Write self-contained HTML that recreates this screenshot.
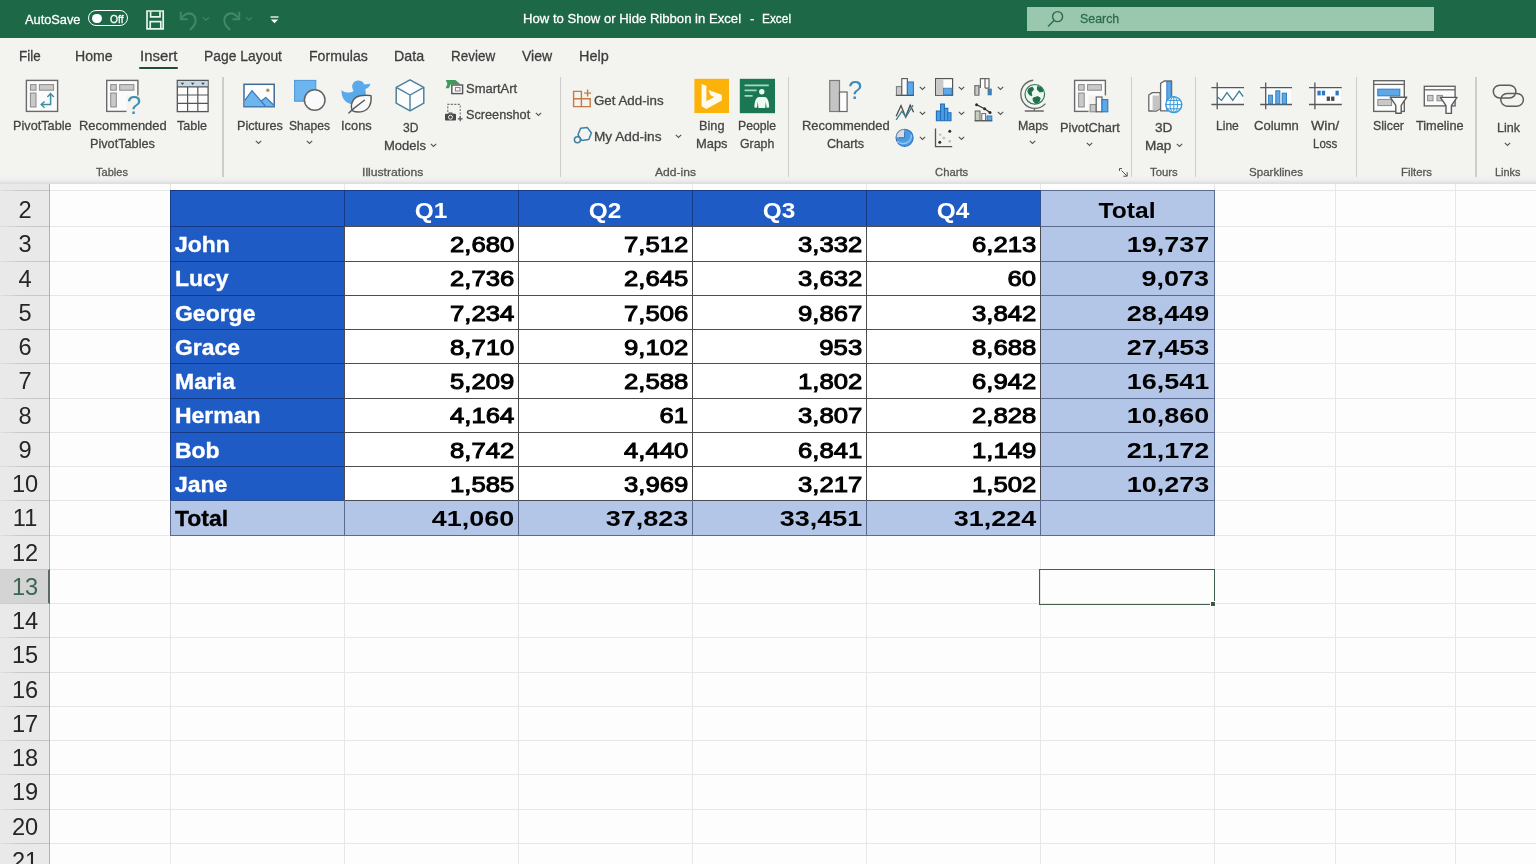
<!DOCTYPE html>
<html><head><meta charset="utf-8"><title>How to Show or Hide Ribbon in Excel - Excel</title>
<style>
html,body{margin:0;padding:0;}
body{width:1536px;height:864px;overflow:hidden;position:relative;background:#fdfdfd;font-family:"Liberation Sans",sans-serif;}
.t{position:absolute;white-space:nowrap;transform-origin:left center;display:block;-webkit-text-stroke:0.28px currentColor;}
.a{position:absolute;}
svg{position:absolute;overflow:visible;}
#titlebar{left:0;top:0;width:1536px;height:38px;background:#1d6847;}
#ribbon{left:0;top:38px;width:1536px;height:139px;background:#f3f3f0;}
#ribshadow{left:0;top:177px;width:1536px;height:7px;background:linear-gradient(#f1f1f1 0%,#eeeeee 45%,#dcdcdc 100%);}
.sep{position:absolute;top:77px;width:1.4px;height:100px;background:#cdcdcb;}
.cell{position:absolute;box-sizing:border-box;}
.num{position:absolute;white-space:nowrap;display:block;font-size:21.2px;line-height:24px;transform-origin:right center;color:#000;}
.nm{position:absolute;white-space:nowrap;display:block;font-size:22.3px;line-height:24px;transform-origin:left center;font-weight:bold;}
.rh{position:absolute;left:0.6px;width:49px;text-align:center;font-size:23.6px;line-height:28px;color:#262626;}
#w{position:absolute;left:0;top:0;width:1536px;height:864px;will-change:transform;}
</style></head><body><div id="w">
<div class="a" id="titlebar"></div>
<span class="t " style="left:25.0px;top:13.9px;font-size:12.9px;line-height:12.9px;color:#fff;transform:scaleX(0.992);">AutoSave</span>
<div class="a" style="left:87.8px;top:9.7px;width:38.4px;height:14.2px;border:1.6px solid #fff;border-radius:10px;"></div>
<div class="a" style="left:92.3px;top:13.7px;width:9.4px;height:9.4px;border-radius:5px;background:#fff;"></div>
<span class="t " style="left:109.5px;top:13.7px;font-size:10.8px;line-height:10.8px;color:#fff;transform:scaleX(0.950);">Off</span>
<svg style="left:146px;top:10.1px" width="19" height="20" viewBox="0 0 19 20" fill="none" stroke="#e6f5ed" stroke-width="1.7">
<path d="M1 1h16.200v17.800H1z"/><path d="M4.600 1.200v5.600h9.400V1.200"/><path d="M4.200 18.600v-7h10.600v7"/></svg>
<svg style="left:177.500px;top:8.600px" width="22" height="22" viewBox="0 0 20 18" preserveAspectRatio="none" fill="none" stroke="#438765" stroke-width="1.8">
<path d="M2.5 2.2v6.2h6.2"/><path d="M2.8 8.2c2-3.6 6-5.6 9.6-4.2 4 1.6 5 6.6 1.6 10.2l-3.2 3"/></svg>
<svg style="left:201.500px;top:15.800px" width="8" height="6" viewBox="0 0 8 6" fill="none" stroke="#438765" stroke-width="1.2"><path d="M1 1.2l3 3 3-3"/></svg>
<svg style="left:220px;top:8.600px" width="22" height="22" viewBox="0 0 20 18" preserveAspectRatio="none" fill="none" stroke="#438765" stroke-width="1.8">
<path d="M17.5 2.2v6.2h-6.2"/><path d="M17.2 8.2c-2-3.6-6-5.6-9.6-4.2-4 1.6-5 6.6-1.6 10.2l3.2 3"/></svg>
<svg style="left:245px;top:15.800px" width="8" height="6" viewBox="0 0 8 6" fill="none" stroke="#438765" stroke-width="1.2"><path d="M1 1.2l3 3 3-3"/></svg>
<svg style="left:270px;top:15.8px" width="9" height="8" viewBox="0 0 9 8"><path d="M0.500 1h8" stroke="#fff" stroke-width="1.300"/><path d="M0.800 3.600h7.400l-3.700 3.600z" fill="#fff"/></svg>
<span class="t " style="left:522.5px;top:11.8px;font-size:13.1px;line-height:13.1px;color:#fff;transform:scaleX(1.002);">How to Show or Hide Ribbon in Excel</span>
<span class="t " style="left:750.3px;top:11.8px;font-size:13.1px;line-height:13.1px;color:#fff;transform:scaleX(0.986);">-</span>
<span class="t " style="left:761.5px;top:11.8px;font-size:13.1px;line-height:13.1px;color:#fff;transform:scaleX(0.908);">Excel</span>
<div class="a" style="left:1027px;top:7px;width:406.5px;height:24.3px;background:#9ac8af;"></div>
<svg style="left:1047px;top:10px" width="18" height="18" viewBox="0 0 18 18" fill="none" stroke="#2c6a4b" stroke-width="1.4"><circle cx="10.6" cy="6.6" r="5"/><path d="M7 10.4L1 16.6"/></svg>
<span class="t " style="left:1080.0px;top:13.2px;font-size:12.8px;line-height:12.8px;color:#2c6a4b;transform:scaleX(0.967);">Search</span>
<div class="a" id="ribbon"></div>
<div class="a" id="ribshadow"></div>
<span class="t " style="left:19.4px;top:49.0px;font-size:14.1px;line-height:14.1px;color:#3d3d3d;transform:scaleX(0.951);">File</span>
<span class="t " style="left:75.0px;top:49.0px;font-size:14.1px;line-height:14.1px;color:#3d3d3d;transform:scaleX(1.000);">Home</span>
<span class="t " style="left:139.6px;top:49.0px;font-size:14.1px;line-height:14.1px;color:#3d3d3d;transform:scaleX(1.061);">Insert</span>
<span class="t " style="left:203.7px;top:49.0px;font-size:14.1px;line-height:14.1px;color:#3d3d3d;transform:scaleX(0.985);">Page Layout</span>
<span class="t " style="left:308.5px;top:49.0px;font-size:14.1px;line-height:14.1px;color:#3d3d3d;transform:scaleX(1.001);">Formulas</span>
<span class="t " style="left:394.3px;top:49.0px;font-size:14.1px;line-height:14.1px;color:#3d3d3d;transform:scaleX(1.011);">Data</span>
<span class="t " style="left:451.2px;top:49.0px;font-size:14.1px;line-height:14.1px;color:#3d3d3d;transform:scaleX(0.954);">Review</span>
<span class="t " style="left:522.0px;top:49.0px;font-size:14.1px;line-height:14.1px;color:#3d3d3d;transform:scaleX(0.996);">View</span>
<span class="t " style="left:579.3px;top:49.0px;font-size:14.1px;line-height:14.1px;color:#3d3d3d;transform:scaleX(1.024);">Help</span>
<div class="a" style="left:139.3px;top:66.8px;width:38.6px;height:2.6px;background:#1f4e38;border-radius:1.3px;"></div>
<div class="sep" style="left:222.4px"></div>
<div class="sep" style="left:559.8px"></div>
<div class="sep" style="left:787.9px"></div>
<div class="sep" style="left:1130.9px"></div>
<div class="sep" style="left:1194.8px"></div>
<div class="sep" style="left:1355.6px"></div>
<div class="sep" style="left:1475.4px"></div>
<span class="t " style="left:12.7px;top:119.5px;font-size:12.9px;line-height:12.9px;color:#444;transform:scaleX(0.985);">PivotTable</span>
<span class="t " style="left:78.7px;top:119.5px;font-size:12.9px;line-height:12.9px;color:#444;transform:scaleX(1.003);">Recommended</span>
<span class="t " style="left:89.8px;top:138.2px;font-size:12.9px;line-height:12.9px;color:#444;transform:scaleX(0.984);">PivotTables</span>
<span class="t " style="left:177.3px;top:119.5px;font-size:12.9px;line-height:12.9px;color:#444;transform:scaleX(0.976);">Table</span>
<span class="t " style="left:96.0px;top:166.9px;font-size:11.2px;line-height:11.2px;color:#555;transform:scaleX(0.988);">Tables</span>
<span class="t " style="left:236.6px;top:119.5px;font-size:12.9px;line-height:12.9px;color:#444;transform:scaleX(0.983);">Pictures</span>
<svg style="left:255.3px;top:140.0px" width="7" height="5" viewBox="0 0 7 5" fill="none" stroke="#555" stroke-width="1.1"><path d="M0.8 0.8l2.7 2.7 2.7-2.7"/></svg>
<span class="t " style="left:289.0px;top:119.5px;font-size:12.9px;line-height:12.9px;color:#444;transform:scaleX(0.937);">Shapes</span>
<svg style="left:305.5px;top:140.0px" width="7" height="5" viewBox="0 0 7 5" fill="none" stroke="#555" stroke-width="1.1"><path d="M0.8 0.8l2.7 2.7 2.7-2.7"/></svg>
<span class="t " style="left:341.3px;top:119.5px;font-size:12.9px;line-height:12.9px;color:#444;transform:scaleX(0.996);">Icons</span>
<span class="t " style="left:402.6px;top:121.9px;font-size:12.9px;line-height:12.9px;color:#444;transform:scaleX(0.940);">3D</span>
<span class="t " style="left:383.8px;top:139.6px;font-size:12.9px;line-height:12.9px;color:#444;transform:scaleX(1.010);">Models</span>
<svg style="left:430.1px;top:143.4px" width="7" height="5" viewBox="0 0 7 5" fill="none" stroke="#555" stroke-width="1.1"><path d="M0.8 0.8l2.7 2.7 2.7-2.7"/></svg>
<span class="t " style="left:466.1px;top:83.0px;font-size:12.9px;line-height:12.9px;color:#444;transform:scaleX(1.006);">SmartArt</span>
<span class="t " style="left:466.1px;top:108.5px;font-size:12.9px;line-height:12.9px;color:#444;transform:scaleX(0.984);">Screenshot</span>
<svg style="left:534.8px;top:111.8px" width="7" height="5" viewBox="0 0 7 5" fill="none" stroke="#555" stroke-width="1.1"><path d="M0.8 0.8l2.7 2.7 2.7-2.7"/></svg>
<span class="t " style="left:361.7px;top:166.9px;font-size:11.2px;line-height:11.2px;color:#555;transform:scaleX(1.086);">Illustrations</span>
<span class="t " style="left:594.3px;top:94.8px;font-size:12.9px;line-height:12.9px;color:#444;transform:scaleX(1.034);">Get Add-ins</span>
<span class="t " style="left:594.3px;top:131.2px;font-size:12.9px;line-height:12.9px;color:#444;transform:scaleX(1.058);">My Add-ins</span>
<svg style="left:674.9px;top:133.8px" width="7" height="5" viewBox="0 0 7 5" fill="none" stroke="#555" stroke-width="1.1"><path d="M0.8 0.8l2.7 2.7 2.7-2.7"/></svg>
<span class="t " style="left:698.7px;top:120.0px;font-size:12.9px;line-height:12.9px;color:#444;transform:scaleX(0.988);">Bing</span>
<span class="t " style="left:696.0px;top:138.4px;font-size:12.9px;line-height:12.9px;color:#444;transform:scaleX(0.999);">Maps</span>
<span class="t " style="left:738.1px;top:120.0px;font-size:12.9px;line-height:12.9px;color:#444;transform:scaleX(0.949);">People</span>
<span class="t " style="left:740.3px;top:138.4px;font-size:12.9px;line-height:12.9px;color:#444;transform:scaleX(0.959);">Graph</span>
<span class="t " style="left:654.5px;top:166.9px;font-size:11.2px;line-height:11.2px;color:#555;transform:scaleX(1.082);">Add-ins</span>
<span class="t " style="left:801.9px;top:119.5px;font-size:12.9px;line-height:12.9px;color:#444;transform:scaleX(1.003);">Recommended</span>
<span class="t " style="left:826.7px;top:138.3px;font-size:12.9px;line-height:12.9px;color:#444;transform:scaleX(0.979);">Charts</span>
<svg style="left:918.5px;top:85.8px" width="7" height="5" viewBox="0 0 7 5" fill="none" stroke="#555" stroke-width="1.1"><path d="M0.8 0.8l2.7 2.7 2.7-2.7"/></svg>
<svg style="left:918.5px;top:111.0px" width="7" height="5" viewBox="0 0 7 5" fill="none" stroke="#555" stroke-width="1.1"><path d="M0.8 0.8l2.7 2.7 2.7-2.7"/></svg>
<svg style="left:957.7px;top:85.8px" width="7" height="5" viewBox="0 0 7 5" fill="none" stroke="#555" stroke-width="1.1"><path d="M0.8 0.8l2.7 2.7 2.7-2.7"/></svg>
<svg style="left:957.7px;top:111.0px" width="7" height="5" viewBox="0 0 7 5" fill="none" stroke="#555" stroke-width="1.1"><path d="M0.8 0.8l2.7 2.7 2.7-2.7"/></svg>
<svg style="left:997.1px;top:85.8px" width="7" height="5" viewBox="0 0 7 5" fill="none" stroke="#555" stroke-width="1.1"><path d="M0.8 0.8l2.7 2.7 2.7-2.7"/></svg>
<svg style="left:997.1px;top:111.0px" width="7" height="5" viewBox="0 0 7 5" fill="none" stroke="#555" stroke-width="1.1"><path d="M0.8 0.8l2.7 2.7 2.7-2.7"/></svg>
<svg style="left:918.5px;top:136.4px" width="7" height="5" viewBox="0 0 7 5" fill="none" stroke="#555" stroke-width="1.1"><path d="M0.8 0.8l2.7 2.7 2.7-2.7"/></svg>
<svg style="left:957.7px;top:136.4px" width="7" height="5" viewBox="0 0 7 5" fill="none" stroke="#555" stroke-width="1.1"><path d="M0.8 0.8l2.7 2.7 2.7-2.7"/></svg>
<span class="t " style="left:1017.9px;top:120.0px;font-size:12.9px;line-height:12.9px;color:#444;transform:scaleX(0.961);">Maps</span>
<svg style="left:1029.2px;top:140.0px" width="7" height="5" viewBox="0 0 7 5" fill="none" stroke="#555" stroke-width="1.1"><path d="M0.8 0.8l2.7 2.7 2.7-2.7"/></svg>
<span class="t " style="left:1060.3px;top:121.9px;font-size:12.9px;line-height:12.9px;color:#444;transform:scaleX(0.993);">PivotChart</span>
<svg style="left:1085.6px;top:142.2px" width="7" height="5" viewBox="0 0 7 5" fill="none" stroke="#555" stroke-width="1.1"><path d="M0.8 0.8l2.7 2.7 2.7-2.7"/></svg>
<span class="t " style="left:934.6px;top:166.9px;font-size:11.2px;line-height:11.2px;color:#555;transform:scaleX(1.006);">Charts</span>
<svg style="left:1118.8px;top:168.3px" width="9" height="9" viewBox="0 0 9 9" fill="none" stroke="#555" stroke-width="1"><path d="M0.5 3V0.5H3"/><path d="M2.5 2.5L8 8"/><path d="M8.2 4.2V8.2H4.2"/></svg>
<span class="t " style="left:1154.8px;top:121.9px;font-size:12.9px;line-height:12.9px;color:#444;transform:scaleX(1.061);">3D</span>
<span class="t " style="left:1144.6px;top:139.6px;font-size:12.9px;line-height:12.9px;color:#444;transform:scaleX(1.052);">Map</span>
<svg style="left:1175.9px;top:143.4px" width="7" height="5" viewBox="0 0 7 5" fill="none" stroke="#555" stroke-width="1.1"><path d="M0.8 0.8l2.7 2.7 2.7-2.7"/></svg>
<span class="t " style="left:1150.0px;top:166.9px;font-size:11.2px;line-height:11.2px;color:#555;transform:scaleX(1.011);">Tours</span>
<span class="t " style="left:1216.4px;top:120.0px;font-size:12.9px;line-height:12.9px;color:#444;transform:scaleX(0.935);">Line</span>
<span class="t " style="left:1254.0px;top:120.0px;font-size:12.9px;line-height:12.9px;color:#444;transform:scaleX(1.010);">Column</span>
<span class="t " style="left:1311.1px;top:120.0px;font-size:12.9px;line-height:12.9px;color:#444;transform:scaleX(1.097);">Win/</span>
<span class="t " style="left:1313.3px;top:138.4px;font-size:12.9px;line-height:12.9px;color:#444;transform:scaleX(0.895);">Loss</span>
<span class="t " style="left:1248.7px;top:166.9px;font-size:11.2px;line-height:11.2px;color:#555;transform:scaleX(1.033);">Sparklines</span>
<span class="t " style="left:1373.0px;top:120.0px;font-size:12.9px;line-height:12.9px;color:#444;transform:scaleX(0.961);">Slicer</span>
<span class="t " style="left:1416.2px;top:120.0px;font-size:12.9px;line-height:12.9px;color:#444;transform:scaleX(0.986);">Timeline</span>
<span class="t " style="left:1400.7px;top:166.9px;font-size:11.2px;line-height:11.2px;color:#555;transform:scaleX(1.017);">Filters</span>
<span class="t " style="left:1496.6px;top:121.9px;font-size:12.9px;line-height:12.9px;color:#444;transform:scaleX(0.972);">Link</span>
<svg style="left:1504.1px;top:142.2px" width="7" height="5" viewBox="0 0 7 5" fill="none" stroke="#555" stroke-width="1.1"><path d="M0.8 0.8l2.7 2.7 2.7-2.7"/></svg>
<span class="t " style="left:1494.8px;top:166.9px;font-size:11.2px;line-height:11.2px;color:#555;transform:scaleX(0.975);">Links</span>
<svg style="left:0;top:0" width="1536" height="190" viewBox="0 0 1536 190"><rect x="26.4" y="80.4" width="31.2" height="31.0" fill="#fbfbfb" stroke="#6a6a6a" stroke-width="1.4"/>
<rect x="30.4" y="84.60000000000001" width="5.6" height="5.6" fill="#c9c9c9" stroke="#8a8a8a" stroke-width="1"/>
<rect x="39.4" y="84.60000000000001" width="14.2" height="5.6" fill="#c9c9c9" stroke="#8a8a8a" stroke-width="1"/>
<rect x="30.4" y="93.0" width="5.6" height="14.0" fill="#c9c9c9" stroke="#8a8a8a" stroke-width="1"/>
<path d="M41.4 104.6H50.6V94" fill="none" stroke="#3c8c9a" stroke-width="1.5"/>
<path d="M44.6 101.4l-3.4 3.2 3.4 3.2M47.4 97l3.2-3.4 3.2 3.4" fill="none" stroke="#3c8c9a" stroke-width="1.4"/>
<rect x="106.7" y="80.4" width="31.2" height="31.0" fill="#fbfbfb" stroke="#6a6a6a" stroke-width="1.4"/>
<rect x="110.7" y="84.60000000000001" width="5.6" height="5.6" fill="#c9c9c9" stroke="#8a8a8a" stroke-width="1"/>
<rect x="119.7" y="84.60000000000001" width="14.2" height="5.6" fill="#c9c9c9" stroke="#8a8a8a" stroke-width="1"/>
<rect x="110.7" y="93.0" width="5.6" height="14.0" fill="#c9c9c9" stroke="#8a8a8a" stroke-width="1"/>
<rect x="126.5" y="95.5" width="15" height="19" fill="#f3f3f0"/>
<text x="126.8" y="113.8" font-family="Liberation Sans, sans-serif" font-size="26" fill="#3e92b0">?</text>
<rect x="177.3" y="80.4" width="30.8" height="31.2" fill="#fcfcfc" stroke="#555" stroke-width="1.3"/>
<rect x="177.9" y="81" width="29.6" height="5.6" fill="#c5d9e8"/>
<path d="M177.3 86.8h30.8M177.3 95h30.8M177.3 103.3h30.8M187.6 86.8v24.8M197.8 86.8v24.8" stroke="#555" stroke-width="1.2" fill="none"/>
<path d="M180.6 82.8h3.6l-1.8 2.2z" fill="#3a4a58"/>
<path d="M190.89999999999998 82.8h3.6l-1.8 2.2z" fill="#3a4a58"/>
<path d="M201.2 82.8h3.6l-1.8 2.2z" fill="#3a4a58"/>
<rect x="244" y="84.3" width="30.2" height="22.4" fill="#fdfdfd" stroke="#3d6c98" stroke-width="1.5"/>
<path d="M244.8 100.4l7.2-9.8 9 10.6 4.800-3.800 7.800 7.600v1.200h-28.800z" fill="#6db5ee"/>
<path d="M244.800 100.400l7.200-9.800 13.400 15.600M261 101.200l4.800-3.800 7.800 7.600" fill="none" stroke="#3577bd" stroke-width="1.200" stroke-linejoin="round"/>
<circle cx="267.8" cy="90.3" r="1.7" fill="#c8853f"/>
<rect x="294.6" y="80.4" width="21.2" height="20.8" fill="#6db5ee" stroke="#4f94d6" stroke-width="1"/>
<circle cx="314.7" cy="100" r="10.3" fill="#fafafa" stroke="#636363" stroke-width="1.5"/>
<path d="M341.6 89.8c1.2 1.8 3.2 2.8 6 2.8 3.6 0 5.4-.8 6-2.2-1-1.2-1.6-2.8-1.4-4.6.4-3.4 3.2-5.6 6.6-5.4 3 .2 5 2 5.6 4.200l6-.800c-.6 2.800-2.600 4.600-5.200 5.400.6 1.600.8 3.400.4 5.200-1 5.400-5.800 9.800-12.200 9.800-7.800 0-12.400-6-11.800-14.400z" fill="#5aa9ea"/>
<path d="M352.200 110.6c-2.400-6.400.8-13.200 8-14.800 3.800-.8 7.600-.6 10.800-.2 1 7.600-1.800 14.200-8.800 16-3.400.8-7 .4-10-1z" fill="#fafafa" stroke="#5a5a5a" stroke-width="1.4" stroke-linejoin="round"/>
<path d="M348.800 113l5-4.600 10.600-8.200" fill="none" stroke="#5a5a5a" stroke-width="1.400" stroke-linecap="round"/>
<path d="M410 79.800l13.800 7.600v15.800l-13.800 7.600-13.800-7.600v-15.800z" fill="#fafcfd" stroke="#4d8199" stroke-width="1.500" stroke-linejoin="round"/>
<path d="M396.200 87.400l13.800 7.600 13.800-7.600M410 95v15.800M399.800 89.400l5.200 2.800" fill="none" stroke="#4d8199" stroke-width="1.400"/>
<path d="M445.800 80h9.600l5 4.200h-9.800l-1.600 4h-3.400l1.800-4.200z" fill="#3f9b57"/>
<rect x="451.800" y="85" width="10.800" height="8.600" fill="#fafafa" stroke="#555" stroke-width="1.400"/>
<rect x="455.400" y="87.600" width="4.600" height="3.400" fill="none" stroke="#777" stroke-width="0.900"/>
<path d="M447.800 112v-7.600h12.400v14" fill="none" stroke="#777" stroke-width="1.100" stroke-dasharray="2.200 1.300"/>
<rect x="445" y="113.800" width="11" height="6.800" rx="0.800" fill="#4a4a4a"/>
<path d="M448 113.800l.8-1.400h3.400l.8 1.400z" fill="#4a4a4a"/>
<circle cx="450.500" cy="117.200" r="2" fill="none" stroke="#f3f3f0" stroke-width="1"/>
<path d="M460.200 116.400v4.800M457.800 118.800h4.800" stroke="#555" stroke-width="1.200"/>
<path d="M573.600 91.400h7.800v15.200h-7.800zM581.400 98.800h8.800v7.800h-8.800M573.600 98.800h7.800" fill="none" stroke="#c67a45" stroke-width="1.400"/>
<path d="M587.600 89.600v7M584.100 93.100h7" stroke="#c67a45" stroke-width="1.400"/>
<path d="M580.600 128.200l6.800-.6 4 5.400-2.600 6.600-7 .8-3.800-5.600z" fill="none" stroke="#3d81a8" stroke-width="1.500" stroke-linejoin="round"/>
<circle cx="577.400" cy="139.800" r="3" fill="#f6f6f4" stroke="#3d81a8" stroke-width="1.500"/>
<rect x="694.400" y="78.800" width="34.600" height="34.200" fill="#fbb30a"/>
<path d="M701.600 84l4.800 1.800v15.400l7.800-4.200-3.600-1.800-2.200-5.200 13.400 4.800v5.600l-15.400 8.600-4.800-2.800z" fill="#fffaf0"/>
<rect x="739.800" y="78.800" width="35.200" height="34.400" fill="#1b7753"/>
<path d="M744.600 85.400h24.200M744.600 90.400h12M744.600 95.800h8" stroke="#a5d9c2" stroke-width="1.700"/>
<circle cx="761.800" cy="91.700" r="2.700" fill="#eefaf4"/>
<path d="M754.400 107.400c.2-5.600 1.200-9.600 4.200-10.400h6.400c3 .8 4 4.800 4.200 10.400l-2.600.4-.8-6.400-.6 6.600h-6.800l-.6-6.600-.8 6.400z" fill="#eefaf4"/>
<rect x="829.700" y="80.500" width="9.800" height="31" fill="#c4c4c4" stroke="#7c7c7c" stroke-width="1.200"/>
<rect x="839.500" y="92" width="7.600" height="19.500" fill="#fdfdfd" stroke="#666" stroke-width="1.200"/>
<text x="847.900" y="99.300" font-family="Liberation Sans, sans-serif" font-size="25.5" fill="#3d8abb">?</text>
<rect x="896.400" y="86.600" width="5.400" height="8.700" fill="#c9c9c9" stroke="#777" stroke-width="1"/>
<rect x="901.800" y="78.600" width="5.600" height="16.700" fill="#fdfdfd" stroke="#555" stroke-width="1.100"/>
<rect x="907.400" y="82" width="6" height="13.300" fill="#5fa8e6" stroke="#2f78c4" stroke-width="1.100"/>
<path d="M895.800 95.400h18.200" stroke="#555" stroke-width="1.100"/>
<rect x="935.600" y="78.600" width="17" height="16.700" fill="#fdfdfd" stroke="#555" stroke-width="1.200"/>
<rect x="936.200" y="79.200" width="7.200" height="15.500" fill="#c9c9c9"/>
<rect x="943.400" y="88.200" width="8.600" height="6.500" fill="#5fa8e6" stroke="#2f78c4" stroke-width="0.800"/>
<path d="M975 95.300v-9.600h3.800v9.600M980.400 88v-9.400h4.600v9.400M985 78.600h4v9.600h-4" fill="#fdfdfd" stroke="#666" stroke-width="1.200"/>
<rect x="975" y="85.700" width="3.800" height="9.600" fill="#c9c9c9" stroke="#777" stroke-width="1"/>
<rect x="987.600" y="88.600" width="4.200" height="6.700" fill="#3f7fb8"/>
<path d="M896.200 116.200l4.800-10.600 4.600 11.400 4.600-11.800 3.400 7" fill="none" stroke="#4a4a4a" stroke-width="1.300"/>
<path d="M896.200 119.800l5.600-8.400 4.200 5.400 7-11.600" fill="none" stroke="#3d7f96" stroke-width="1.300"/>
<path d="M936.400 120.800v-9.800h4.200v-7h3.800v4.400h3.400v4.400h3.200v8z" fill="#4b9ce2" stroke="#1f6db8" stroke-width="1.100"/>
<path d="M940.600 111v9.800M944.400 108.400v12.400M947.800 112.800v8" stroke="#1f6db8" stroke-width="1"/>
<rect x="975.200" y="111" width="4.800" height="9.600" fill="#c8cdbd" stroke="#666" stroke-width="1"/>
<rect x="981.800" y="113.600" width="3.800" height="7" fill="#fdfdfd" stroke="#666" stroke-width="1"/>
<rect x="987" y="116" width="4.800" height="4.600" fill="#5fa8e6" stroke="#2f78c4" stroke-width="1"/>
<path d="M974.600 120.800h17.600" stroke="#555" stroke-width="1.200"/>
<path d="M976.600 104.800l8 4 5.400 3.600" fill="none" stroke="#2e2e2e" stroke-width="1.200"/>
<circle cx="976.6" cy="104.8" r="1.500" fill="#2e2e2e"/>
<circle cx="984.6" cy="108.8" r="1.500" fill="#2e2e2e"/>
<circle cx="990" cy="112.4" r="1.500" fill="#2e2e2e"/>
<circle cx="904.600" cy="137.800" r="8.500" fill="#4b9ce2" stroke="#2f78c4" stroke-width="1.200"/>
<path d="M904.600 137.800v-8.500a8.500 8.500 0 0 0-8.500 8.500z" fill="#d4dde6" stroke="#7a8a9a" stroke-width="0.900"/>
<path d="M904.600 132.200v5.600h-5.600" fill="none" stroke="#2f78c4" stroke-width="0.900"/>
<path d="M897 141.200c2.600 2.400 7 3.200 10.400 1.200 3-1.800 4.200-4.800 3.800-7.800" fill="none" stroke="#9ccaf2" stroke-width="1.300"/>
<path d="M935.500 128.400v18.200h16.700" fill="none" stroke="#555" stroke-width="1.300"/>
<circle cx="949.800" cy="131.300" r="1.500" fill="#333"/><circle cx="939.800" cy="142.200" r="1.500" fill="#333"/>
<circle cx="940.200" cy="134.600" r="1.200" fill="#b8b8b8"/><circle cx="943.800" cy="138" r="1.600" fill="#c8c8c8"/><circle cx="949.800" cy="141.200" r="1.200" fill="#b8b8b8"/>
<circle cx="1034.800" cy="94.300" r="9.800" fill="#eef7f1" stroke="#2a7a52" stroke-width="1.200"/>
<path d="M1028.800 88.600l3.600-1.400 1.200 2.200-2.400 3 .6 3.400-2.600-1.200-1.400-3.200zM1037.600 86.600l3.800 1.200 1.600 3.600-3.200.6-2.400-2.200zM1033 98.200l4.600-1.600 2.600 1.400-1 3.600-3.400 1.800-2.400-2.200z" fill="#1f7048" stroke="#1f7048" stroke-width="1" stroke-linejoin="round"/>
<path d="M1033.200 80.200c-7.200.8-12.400 6.800-12.400 14 0 7.800 6.200 14.200 14 14.200 4.200 0 8-1.800 10.600-4.800" fill="none" stroke="#686868" stroke-width="1.400"/>
<path d="M1034.400 108.400v2.600M1024.800 111h19" stroke="#686868" stroke-width="1.400" fill="none"/>
<rect x="1074.6" y="80.4" width="30.8" height="31" fill="#fbfbfb" stroke="#6a6a6a" stroke-width="1.4"/>
<rect x="1078.6" y="84.60000000000001" width="5.6" height="5.6" fill="#c9c9c9" stroke="#8a8a8a" stroke-width="1"/>
<rect x="1087.6" y="84.60000000000001" width="13.8" height="5.6" fill="#c9c9c9" stroke="#8a8a8a" stroke-width="1"/>
<rect x="1078.6" y="93.0" width="5.6" height="14" fill="#c9c9c9" stroke="#8a8a8a" stroke-width="1"/>
<rect x="1088.600" y="95.400" width="20" height="17.600" fill="#f3f3f0"/>
<rect x="1090.200" y="104.600" width="6" height="7.200" fill="#c9c9c9" stroke="#888" stroke-width="1"/>
<rect x="1096.200" y="97" width="5.800" height="14.800" fill="#fdfdfd" stroke="#555" stroke-width="1.100"/>
<rect x="1102" y="99.600" width="5.800" height="12.200" fill="#5fa8e6" stroke="#2f78c4" stroke-width="1.100"/>
<path d="M1148.800 95l3.600-2.400h7.800v16.200l-3.600 2.200h-7.800z" fill="#fdfdfd" stroke="#686868" stroke-width="1.300" stroke-linejoin="round"/>
<path d="M1152.600 95.600h7.200v13l-3.200 2h-4z" fill="#c4c4c4"/>
<path d="M1160.600 83.400l3.600-2.400h7.400v26l-3.400 3.800h-7.600z" fill="#fdfdfd" stroke="#686868" stroke-width="1.300" stroke-linejoin="round"/>
<path d="M1166.800 81.600h4.400v25l-4.400 3.600z" fill="#5fa8e6" stroke="#2f78c4" stroke-width="0.900"/>
<circle cx="1173.800" cy="104.600" r="8" fill="#f4fbff" stroke="#3a9ad9" stroke-width="1.400"/>
<path d="M1165.800 104.600h16M1173.800 96.600v16M1167.200 100.400h13.200M1167.200 108.800h13.200" stroke="#3a9ad9" stroke-width="1" fill="none"/>
<ellipse cx="1173.800" cy="104.600" rx="3.800" ry="8" fill="none" stroke="#3a9ad9" stroke-width="1"/>
<rect x="1217.2" y="87.600" width="25.799999999999955" height="16.800" fill="#fbfdfe"/>
<path d="M1211.4 87.600H1244M1211.4 104.500H1244M1217.2 82.400V109.200" stroke="#575757" stroke-width="1.300" fill="none"/>
<path d="M1217.400 97l4.200 3.400 5.400-7.800 5.800 7.800 6.400-9.300 3.900 5.400" fill="none" stroke="#3d808e" stroke-width="1.300"/>
<rect x="1265.7" y="87.600" width="25.299999999999955" height="16.800" fill="#fbfdfe"/>
<path d="M1260.2 87.600H1292M1260.2 104.500H1292M1265.7 82.400V109.200" stroke="#575757" stroke-width="1.300" fill="none"/>
<rect x="1268.6" y="95.2" width="3.8" height="8.6" fill="#5fa8e6" stroke="#2f7fc4" stroke-width="1"/>
<rect x="1275.8" y="90.8" width="4.0" height="13.0" fill="#5fa8e6" stroke="#2f7fc4" stroke-width="1"/>
<rect x="1282.2" y="93.2" width="4.3" height="10.6" fill="#5fa8e6" stroke="#2f7fc4" stroke-width="1"/>
<rect x="1314.9" y="87.600" width="25.899999999999864" height="16.800" fill="#fbfdfe"/>
<path d="M1309 87.600H1341.8M1309 104.500H1341.8M1314.9 82.400V109.200" stroke="#575757" stroke-width="1.300" fill="none"/>
<rect x="1317.4" y="90.700" width="3.300" height="4.700" fill="#2f78c0"/>
<rect x="1321.8" y="90.700" width="3.300" height="4.700" fill="#2f78c0"/>
<rect x="1335.5" y="90.700" width="3.300" height="4.700" fill="#2f78c0"/>
<rect x="1326.7" y="96.600" width="3.300" height="4.300" fill="#4a4a4a"/>
<rect x="1331.1" y="96.600" width="3.300" height="4.300" fill="#4a4a4a"/>
<rect x="1373.700" y="80.700" width="30.600" height="30.700" fill="#fdfdfd" stroke="#666" stroke-width="1.400"/>
<path d="M1373.700 84.400h30.600" stroke="#666" stroke-width="1.300"/>
<rect x="1377.800" y="89.200" width="22" height="6.600" fill="#5fa8e6" stroke="#2f80d4" stroke-width="1.100"/>
<rect x="1377.800" y="99.400" width="13.800" height="6.200" fill="#c9c9c9" stroke="#8a8a8a" stroke-width="1"/>
<path d="M1390.2 97.2h16.600l-5.600 8.200v7.800h-5.400v-7.800z" fill="#fcfcfc" stroke="#5a5a5a" stroke-width="1.400" stroke-linejoin="round"/>
<rect x="1424.300" y="86.300" width="30.800" height="19.600" fill="#fbfbfb" stroke="#666" stroke-width="1.400"/>
<path d="M1424.300 89.800h30.800" stroke="#666" stroke-width="1.300"/>
<rect x="1427.600" y="95.400" width="5.400" height="5.400" fill="#c9c9c9" stroke="#8a8a8a" stroke-width="1"/>
<rect x="1437" y="95.400" width="5.400" height="5.400" fill="#c9c9c9" stroke="#8a8a8a" stroke-width="1"/>
<path d="M1440.4 97.4h16.600l-5.600 8.200v7.800h-5.400v-7.800z" fill="#fcfcfc" stroke="#5a5a5a" stroke-width="1.400" stroke-linejoin="round"/>
<rect x="1493.300" y="85.200" width="22.600" height="12.800" rx="6.400" fill="none" stroke="#5c5c5c" stroke-width="1.500"/>
<rect x="1500.800" y="93.400" width="22.600" height="12.800" rx="6.400" fill="none" stroke="#5c5c5c" stroke-width="1.500"/></svg>
<div class="a" style="left:0;top:184px;width:49.2px;height:680px;background:#e9e9e9;border-right:1.2px solid #b2b2b2;"></div>
<div class="a" style="left:0;top:569.25px;width:48.4px;height:34.25px;background:#d3d4d3;border-right:2px solid #5a6b62;"></div>
<div class="a" style="left:50px;top:189.50px;width:1486px;height:1px;background:#e7e7e7;"></div>
<div class="a" style="left:0;top:189.50px;width:49px;height:1px;background:linear-gradient(90deg,rgba(200,200,200,0.25) 0%,#cbcbcb 35%,#c4c4c4 100%);"></div>
<div class="a" style="left:50px;top:226.25px;width:1486px;height:1px;background:#e7e7e7;"></div>
<div class="a" style="left:0;top:226.25px;width:49px;height:1px;background:linear-gradient(90deg,rgba(200,200,200,0.25) 0%,#cbcbcb 35%,#c4c4c4 100%);"></div>
<div class="a" style="left:50px;top:260.50px;width:1486px;height:1px;background:#e7e7e7;"></div>
<div class="a" style="left:0;top:260.50px;width:49px;height:1px;background:linear-gradient(90deg,rgba(200,200,200,0.25) 0%,#cbcbcb 35%,#c4c4c4 100%);"></div>
<div class="a" style="left:50px;top:294.75px;width:1486px;height:1px;background:#e7e7e7;"></div>
<div class="a" style="left:0;top:294.75px;width:49px;height:1px;background:linear-gradient(90deg,rgba(200,200,200,0.25) 0%,#cbcbcb 35%,#c4c4c4 100%);"></div>
<div class="a" style="left:50px;top:329.00px;width:1486px;height:1px;background:#e7e7e7;"></div>
<div class="a" style="left:0;top:329.00px;width:49px;height:1px;background:linear-gradient(90deg,rgba(200,200,200,0.25) 0%,#cbcbcb 35%,#c4c4c4 100%);"></div>
<div class="a" style="left:50px;top:363.25px;width:1486px;height:1px;background:#e7e7e7;"></div>
<div class="a" style="left:0;top:363.25px;width:49px;height:1px;background:linear-gradient(90deg,rgba(200,200,200,0.25) 0%,#cbcbcb 35%,#c4c4c4 100%);"></div>
<div class="a" style="left:50px;top:397.50px;width:1486px;height:1px;background:#e7e7e7;"></div>
<div class="a" style="left:0;top:397.50px;width:49px;height:1px;background:linear-gradient(90deg,rgba(200,200,200,0.25) 0%,#cbcbcb 35%,#c4c4c4 100%);"></div>
<div class="a" style="left:50px;top:431.75px;width:1486px;height:1px;background:#e7e7e7;"></div>
<div class="a" style="left:0;top:431.75px;width:49px;height:1px;background:linear-gradient(90deg,rgba(200,200,200,0.25) 0%,#cbcbcb 35%,#c4c4c4 100%);"></div>
<div class="a" style="left:50px;top:466.00px;width:1486px;height:1px;background:#e7e7e7;"></div>
<div class="a" style="left:0;top:466.00px;width:49px;height:1px;background:linear-gradient(90deg,rgba(200,200,200,0.25) 0%,#cbcbcb 35%,#c4c4c4 100%);"></div>
<div class="a" style="left:50px;top:500.25px;width:1486px;height:1px;background:#e7e7e7;"></div>
<div class="a" style="left:0;top:500.25px;width:49px;height:1px;background:linear-gradient(90deg,rgba(200,200,200,0.25) 0%,#cbcbcb 35%,#c4c4c4 100%);"></div>
<div class="a" style="left:50px;top:534.50px;width:1486px;height:1px;background:#e7e7e7;"></div>
<div class="a" style="left:0;top:534.50px;width:49px;height:1px;background:linear-gradient(90deg,rgba(200,200,200,0.25) 0%,#cbcbcb 35%,#c4c4c4 100%);"></div>
<div class="a" style="left:50px;top:568.75px;width:1486px;height:1px;background:#e7e7e7;"></div>
<div class="a" style="left:0;top:568.75px;width:49px;height:1px;background:linear-gradient(90deg,rgba(200,200,200,0.25) 0%,#cbcbcb 35%,#c4c4c4 100%);"></div>
<div class="a" style="left:50px;top:603.00px;width:1486px;height:1px;background:#e7e7e7;"></div>
<div class="a" style="left:0;top:603.00px;width:49px;height:1px;background:linear-gradient(90deg,rgba(200,200,200,0.25) 0%,#cbcbcb 35%,#c4c4c4 100%);"></div>
<div class="a" style="left:50px;top:637.25px;width:1486px;height:1px;background:#e7e7e7;"></div>
<div class="a" style="left:0;top:637.25px;width:49px;height:1px;background:linear-gradient(90deg,rgba(200,200,200,0.25) 0%,#cbcbcb 35%,#c4c4c4 100%);"></div>
<div class="a" style="left:50px;top:671.50px;width:1486px;height:1px;background:#e7e7e7;"></div>
<div class="a" style="left:0;top:671.50px;width:49px;height:1px;background:linear-gradient(90deg,rgba(200,200,200,0.25) 0%,#cbcbcb 35%,#c4c4c4 100%);"></div>
<div class="a" style="left:50px;top:705.75px;width:1486px;height:1px;background:#e7e7e7;"></div>
<div class="a" style="left:0;top:705.75px;width:49px;height:1px;background:linear-gradient(90deg,rgba(200,200,200,0.25) 0%,#cbcbcb 35%,#c4c4c4 100%);"></div>
<div class="a" style="left:50px;top:740.00px;width:1486px;height:1px;background:#e7e7e7;"></div>
<div class="a" style="left:0;top:740.00px;width:49px;height:1px;background:linear-gradient(90deg,rgba(200,200,200,0.25) 0%,#cbcbcb 35%,#c4c4c4 100%);"></div>
<div class="a" style="left:50px;top:774.25px;width:1486px;height:1px;background:#e7e7e7;"></div>
<div class="a" style="left:0;top:774.25px;width:49px;height:1px;background:linear-gradient(90deg,rgba(200,200,200,0.25) 0%,#cbcbcb 35%,#c4c4c4 100%);"></div>
<div class="a" style="left:50px;top:808.50px;width:1486px;height:1px;background:#e7e7e7;"></div>
<div class="a" style="left:0;top:808.50px;width:49px;height:1px;background:linear-gradient(90deg,rgba(200,200,200,0.25) 0%,#cbcbcb 35%,#c4c4c4 100%);"></div>
<div class="a" style="left:50px;top:842.75px;width:1486px;height:1px;background:#e7e7e7;"></div>
<div class="a" style="left:0;top:842.75px;width:49px;height:1px;background:linear-gradient(90deg,rgba(200,200,200,0.25) 0%,#cbcbcb 35%,#c4c4c4 100%);"></div>
<div class="a" style="left:50px;top:877.00px;width:1486px;height:1px;background:#e7e7e7;"></div>
<div class="a" style="left:0;top:877.00px;width:49px;height:1px;background:linear-gradient(90deg,rgba(200,200,200,0.25) 0%,#cbcbcb 35%,#c4c4c4 100%);"></div>
<div class="a" style="left:170.0px;top:184px;width:1px;height:680px;background:#e7e7e7;"></div>
<div class="a" style="left:344.0px;top:184px;width:1px;height:680px;background:#e7e7e7;"></div>
<div class="a" style="left:518.0px;top:184px;width:1px;height:680px;background:#e7e7e7;"></div>
<div class="a" style="left:692.0px;top:184px;width:1px;height:680px;background:#e7e7e7;"></div>
<div class="a" style="left:866.0px;top:184px;width:1px;height:680px;background:#e7e7e7;"></div>
<div class="a" style="left:1040.0px;top:184px;width:1px;height:680px;background:#e7e7e7;"></div>
<div class="a" style="left:1214.0px;top:184px;width:1px;height:680px;background:#e7e7e7;"></div>
<div class="a" style="left:1334.5px;top:184px;width:1px;height:680px;background:#e7e7e7;"></div>
<div class="a" style="left:1455.0px;top:184px;width:1px;height:680px;background:#e7e7e7;"></div>
<div class="rh" style="top:196.0px;color:#262626">2</div>
<div class="rh" style="top:230.2px;color:#262626">3</div>
<div class="rh" style="top:264.5px;color:#262626">4</div>
<div class="rh" style="top:298.7px;color:#262626">5</div>
<div class="rh" style="top:333.0px;color:#262626">6</div>
<div class="rh" style="top:367.2px;color:#262626">7</div>
<div class="rh" style="top:401.5px;color:#262626">8</div>
<div class="rh" style="top:435.7px;color:#262626">9</div>
<div class="rh" style="top:470.0px;color:#262626">10</div>
<div class="rh" style="top:504.2px;color:#262626">11</div>
<div class="rh" style="top:538.5px;color:#262626">12</div>
<div class="rh" style="top:572.7px;color:#386650">13</div>
<div class="rh" style="top:607.0px;color:#262626">14</div>
<div class="rh" style="top:641.2px;color:#262626">15</div>
<div class="rh" style="top:675.5px;color:#262626">16</div>
<div class="rh" style="top:709.7px;color:#262626">17</div>
<div class="rh" style="top:744.0px;color:#262626">18</div>
<div class="rh" style="top:778.2px;color:#262626">19</div>
<div class="rh" style="top:812.5px;color:#262626">20</div>
<div class="rh" style="top:846.7px;color:#262626">21</div>
<div class="a" style="left:170.50px;top:190.00px;width:870.00px;height:36.75px;background:#1f5bc4;"></div>
<div class="a" style="left:1040.50px;top:190.00px;width:174.00px;height:345.00px;background:#b4c6e7;"></div>
<div class="a" style="left:170.50px;top:226.75px;width:174.00px;height:274.00px;background:#1f5bc4;"></div>
<div class="a" style="left:344.50px;top:226.75px;width:696.00px;height:274.00px;background:#ffffff;"></div>
<div class="a" style="left:170.50px;top:500.75px;width:870.00px;height:34.25px;background:#b4c6e7;"></div>
<div class="a" style="left:170.00px;top:189.50px;width:175.00px;height:1px;background:#153a88;"></div>
<div class="a" style="left:344.00px;top:189.50px;width:175.00px;height:1px;background:#153a88;"></div>
<div class="a" style="left:518.00px;top:189.50px;width:175.00px;height:1px;background:#153a88;"></div>
<div class="a" style="left:692.00px;top:189.50px;width:175.00px;height:1px;background:#153a88;"></div>
<div class="a" style="left:866.00px;top:189.50px;width:175.00px;height:1px;background:#153a88;"></div>
<div class="a" style="left:1040.00px;top:189.50px;width:175.00px;height:1px;background:#5a6a90;"></div>
<div class="a" style="left:170.00px;top:226.25px;width:175.00px;height:1px;background:#153a88;"></div>
<div class="a" style="left:344.00px;top:226.25px;width:175.00px;height:1px;background:#4d4d4f;"></div>
<div class="a" style="left:518.00px;top:226.25px;width:175.00px;height:1px;background:#4d4d4f;"></div>
<div class="a" style="left:692.00px;top:226.25px;width:175.00px;height:1px;background:#4d4d4f;"></div>
<div class="a" style="left:866.00px;top:226.25px;width:175.00px;height:1px;background:#4d4d4f;"></div>
<div class="a" style="left:1040.00px;top:226.25px;width:175.00px;height:1px;background:#5a6a90;"></div>
<div class="a" style="left:170.00px;top:260.50px;width:175.00px;height:1px;background:#153a88;"></div>
<div class="a" style="left:344.00px;top:260.50px;width:175.00px;height:1px;background:#4d4d4f;"></div>
<div class="a" style="left:518.00px;top:260.50px;width:175.00px;height:1px;background:#4d4d4f;"></div>
<div class="a" style="left:692.00px;top:260.50px;width:175.00px;height:1px;background:#4d4d4f;"></div>
<div class="a" style="left:866.00px;top:260.50px;width:175.00px;height:1px;background:#4d4d4f;"></div>
<div class="a" style="left:1040.00px;top:260.50px;width:175.00px;height:1px;background:#5a6a90;"></div>
<div class="a" style="left:170.00px;top:294.75px;width:175.00px;height:1px;background:#153a88;"></div>
<div class="a" style="left:344.00px;top:294.75px;width:175.00px;height:1px;background:#4d4d4f;"></div>
<div class="a" style="left:518.00px;top:294.75px;width:175.00px;height:1px;background:#4d4d4f;"></div>
<div class="a" style="left:692.00px;top:294.75px;width:175.00px;height:1px;background:#4d4d4f;"></div>
<div class="a" style="left:866.00px;top:294.75px;width:175.00px;height:1px;background:#4d4d4f;"></div>
<div class="a" style="left:1040.00px;top:294.75px;width:175.00px;height:1px;background:#5a6a90;"></div>
<div class="a" style="left:170.00px;top:329.00px;width:175.00px;height:1px;background:#153a88;"></div>
<div class="a" style="left:344.00px;top:329.00px;width:175.00px;height:1px;background:#4d4d4f;"></div>
<div class="a" style="left:518.00px;top:329.00px;width:175.00px;height:1px;background:#4d4d4f;"></div>
<div class="a" style="left:692.00px;top:329.00px;width:175.00px;height:1px;background:#4d4d4f;"></div>
<div class="a" style="left:866.00px;top:329.00px;width:175.00px;height:1px;background:#4d4d4f;"></div>
<div class="a" style="left:1040.00px;top:329.00px;width:175.00px;height:1px;background:#5a6a90;"></div>
<div class="a" style="left:170.00px;top:363.25px;width:175.00px;height:1px;background:#153a88;"></div>
<div class="a" style="left:344.00px;top:363.25px;width:175.00px;height:1px;background:#4d4d4f;"></div>
<div class="a" style="left:518.00px;top:363.25px;width:175.00px;height:1px;background:#4d4d4f;"></div>
<div class="a" style="left:692.00px;top:363.25px;width:175.00px;height:1px;background:#4d4d4f;"></div>
<div class="a" style="left:866.00px;top:363.25px;width:175.00px;height:1px;background:#4d4d4f;"></div>
<div class="a" style="left:1040.00px;top:363.25px;width:175.00px;height:1px;background:#5a6a90;"></div>
<div class="a" style="left:170.00px;top:397.50px;width:175.00px;height:1px;background:#153a88;"></div>
<div class="a" style="left:344.00px;top:397.50px;width:175.00px;height:1px;background:#4d4d4f;"></div>
<div class="a" style="left:518.00px;top:397.50px;width:175.00px;height:1px;background:#4d4d4f;"></div>
<div class="a" style="left:692.00px;top:397.50px;width:175.00px;height:1px;background:#4d4d4f;"></div>
<div class="a" style="left:866.00px;top:397.50px;width:175.00px;height:1px;background:#4d4d4f;"></div>
<div class="a" style="left:1040.00px;top:397.50px;width:175.00px;height:1px;background:#5a6a90;"></div>
<div class="a" style="left:170.00px;top:431.75px;width:175.00px;height:1px;background:#153a88;"></div>
<div class="a" style="left:344.00px;top:431.75px;width:175.00px;height:1px;background:#4d4d4f;"></div>
<div class="a" style="left:518.00px;top:431.75px;width:175.00px;height:1px;background:#4d4d4f;"></div>
<div class="a" style="left:692.00px;top:431.75px;width:175.00px;height:1px;background:#4d4d4f;"></div>
<div class="a" style="left:866.00px;top:431.75px;width:175.00px;height:1px;background:#4d4d4f;"></div>
<div class="a" style="left:1040.00px;top:431.75px;width:175.00px;height:1px;background:#5a6a90;"></div>
<div class="a" style="left:170.00px;top:466.00px;width:175.00px;height:1px;background:#153a88;"></div>
<div class="a" style="left:344.00px;top:466.00px;width:175.00px;height:1px;background:#4d4d4f;"></div>
<div class="a" style="left:518.00px;top:466.00px;width:175.00px;height:1px;background:#4d4d4f;"></div>
<div class="a" style="left:692.00px;top:466.00px;width:175.00px;height:1px;background:#4d4d4f;"></div>
<div class="a" style="left:866.00px;top:466.00px;width:175.00px;height:1px;background:#4d4d4f;"></div>
<div class="a" style="left:1040.00px;top:466.00px;width:175.00px;height:1px;background:#5a6a90;"></div>
<div class="a" style="left:170.00px;top:500.25px;width:175.00px;height:1px;background:#2f4f94;"></div>
<div class="a" style="left:344.00px;top:500.25px;width:175.00px;height:1px;background:#4d4d4f;"></div>
<div class="a" style="left:518.00px;top:500.25px;width:175.00px;height:1px;background:#4d4d4f;"></div>
<div class="a" style="left:692.00px;top:500.25px;width:175.00px;height:1px;background:#4d4d4f;"></div>
<div class="a" style="left:866.00px;top:500.25px;width:175.00px;height:1px;background:#4d4d4f;"></div>
<div class="a" style="left:1040.00px;top:500.25px;width:175.00px;height:1px;background:#5a6a90;"></div>
<div class="a" style="left:170.00px;top:534.50px;width:175.00px;height:1px;background:#5a6a90;"></div>
<div class="a" style="left:344.00px;top:534.50px;width:175.00px;height:1px;background:#5a6a90;"></div>
<div class="a" style="left:518.00px;top:534.50px;width:175.00px;height:1px;background:#5a6a90;"></div>
<div class="a" style="left:692.00px;top:534.50px;width:175.00px;height:1px;background:#5a6a90;"></div>
<div class="a" style="left:866.00px;top:534.50px;width:175.00px;height:1px;background:#5a6a90;"></div>
<div class="a" style="left:1040.00px;top:534.50px;width:175.00px;height:1px;background:#5a6a90;"></div>
<div class="a" style="left:170.00px;top:189.50px;width:1px;height:37.75px;background:#153a88;"></div>
<div class="a" style="left:170.00px;top:226.25px;width:1px;height:35.25px;background:#153a88;"></div>
<div class="a" style="left:170.00px;top:260.50px;width:1px;height:35.25px;background:#153a88;"></div>
<div class="a" style="left:170.00px;top:294.75px;width:1px;height:35.25px;background:#153a88;"></div>
<div class="a" style="left:170.00px;top:329.00px;width:1px;height:35.25px;background:#153a88;"></div>
<div class="a" style="left:170.00px;top:363.25px;width:1px;height:35.25px;background:#153a88;"></div>
<div class="a" style="left:170.00px;top:397.50px;width:1px;height:35.25px;background:#153a88;"></div>
<div class="a" style="left:170.00px;top:431.75px;width:1px;height:35.25px;background:#153a88;"></div>
<div class="a" style="left:170.00px;top:466.00px;width:1px;height:35.25px;background:#153a88;"></div>
<div class="a" style="left:170.00px;top:500.25px;width:1px;height:35.25px;background:#5a6a90;"></div>
<div class="a" style="left:344.00px;top:189.50px;width:1px;height:37.75px;background:#153a88;"></div>
<div class="a" style="left:344.00px;top:226.25px;width:1px;height:35.25px;background:#4d4d4f;"></div>
<div class="a" style="left:344.00px;top:260.50px;width:1px;height:35.25px;background:#4d4d4f;"></div>
<div class="a" style="left:344.00px;top:294.75px;width:1px;height:35.25px;background:#4d4d4f;"></div>
<div class="a" style="left:344.00px;top:329.00px;width:1px;height:35.25px;background:#4d4d4f;"></div>
<div class="a" style="left:344.00px;top:363.25px;width:1px;height:35.25px;background:#4d4d4f;"></div>
<div class="a" style="left:344.00px;top:397.50px;width:1px;height:35.25px;background:#4d4d4f;"></div>
<div class="a" style="left:344.00px;top:431.75px;width:1px;height:35.25px;background:#4d4d4f;"></div>
<div class="a" style="left:344.00px;top:466.00px;width:1px;height:35.25px;background:#4d4d4f;"></div>
<div class="a" style="left:344.00px;top:500.25px;width:1px;height:35.25px;background:#5a6a90;"></div>
<div class="a" style="left:518.00px;top:189.50px;width:1px;height:37.75px;background:#153a88;"></div>
<div class="a" style="left:518.00px;top:226.25px;width:1px;height:35.25px;background:#4d4d4f;"></div>
<div class="a" style="left:518.00px;top:260.50px;width:1px;height:35.25px;background:#4d4d4f;"></div>
<div class="a" style="left:518.00px;top:294.75px;width:1px;height:35.25px;background:#4d4d4f;"></div>
<div class="a" style="left:518.00px;top:329.00px;width:1px;height:35.25px;background:#4d4d4f;"></div>
<div class="a" style="left:518.00px;top:363.25px;width:1px;height:35.25px;background:#4d4d4f;"></div>
<div class="a" style="left:518.00px;top:397.50px;width:1px;height:35.25px;background:#4d4d4f;"></div>
<div class="a" style="left:518.00px;top:431.75px;width:1px;height:35.25px;background:#4d4d4f;"></div>
<div class="a" style="left:518.00px;top:466.00px;width:1px;height:35.25px;background:#4d4d4f;"></div>
<div class="a" style="left:518.00px;top:500.25px;width:1px;height:35.25px;background:#5a6a90;"></div>
<div class="a" style="left:692.00px;top:189.50px;width:1px;height:37.75px;background:#153a88;"></div>
<div class="a" style="left:692.00px;top:226.25px;width:1px;height:35.25px;background:#4d4d4f;"></div>
<div class="a" style="left:692.00px;top:260.50px;width:1px;height:35.25px;background:#4d4d4f;"></div>
<div class="a" style="left:692.00px;top:294.75px;width:1px;height:35.25px;background:#4d4d4f;"></div>
<div class="a" style="left:692.00px;top:329.00px;width:1px;height:35.25px;background:#4d4d4f;"></div>
<div class="a" style="left:692.00px;top:363.25px;width:1px;height:35.25px;background:#4d4d4f;"></div>
<div class="a" style="left:692.00px;top:397.50px;width:1px;height:35.25px;background:#4d4d4f;"></div>
<div class="a" style="left:692.00px;top:431.75px;width:1px;height:35.25px;background:#4d4d4f;"></div>
<div class="a" style="left:692.00px;top:466.00px;width:1px;height:35.25px;background:#4d4d4f;"></div>
<div class="a" style="left:692.00px;top:500.25px;width:1px;height:35.25px;background:#5a6a90;"></div>
<div class="a" style="left:866.00px;top:189.50px;width:1px;height:37.75px;background:#153a88;"></div>
<div class="a" style="left:866.00px;top:226.25px;width:1px;height:35.25px;background:#4d4d4f;"></div>
<div class="a" style="left:866.00px;top:260.50px;width:1px;height:35.25px;background:#4d4d4f;"></div>
<div class="a" style="left:866.00px;top:294.75px;width:1px;height:35.25px;background:#4d4d4f;"></div>
<div class="a" style="left:866.00px;top:329.00px;width:1px;height:35.25px;background:#4d4d4f;"></div>
<div class="a" style="left:866.00px;top:363.25px;width:1px;height:35.25px;background:#4d4d4f;"></div>
<div class="a" style="left:866.00px;top:397.50px;width:1px;height:35.25px;background:#4d4d4f;"></div>
<div class="a" style="left:866.00px;top:431.75px;width:1px;height:35.25px;background:#4d4d4f;"></div>
<div class="a" style="left:866.00px;top:466.00px;width:1px;height:35.25px;background:#4d4d4f;"></div>
<div class="a" style="left:866.00px;top:500.25px;width:1px;height:35.25px;background:#5a6a90;"></div>
<div class="a" style="left:1040.00px;top:189.50px;width:1px;height:37.75px;background:#2f4f94;"></div>
<div class="a" style="left:1040.00px;top:226.25px;width:1px;height:35.25px;background:#4d4d4f;"></div>
<div class="a" style="left:1040.00px;top:260.50px;width:1px;height:35.25px;background:#4d4d4f;"></div>
<div class="a" style="left:1040.00px;top:294.75px;width:1px;height:35.25px;background:#4d4d4f;"></div>
<div class="a" style="left:1040.00px;top:329.00px;width:1px;height:35.25px;background:#4d4d4f;"></div>
<div class="a" style="left:1040.00px;top:363.25px;width:1px;height:35.25px;background:#4d4d4f;"></div>
<div class="a" style="left:1040.00px;top:397.50px;width:1px;height:35.25px;background:#4d4d4f;"></div>
<div class="a" style="left:1040.00px;top:431.75px;width:1px;height:35.25px;background:#4d4d4f;"></div>
<div class="a" style="left:1040.00px;top:466.00px;width:1px;height:35.25px;background:#4d4d4f;"></div>
<div class="a" style="left:1040.00px;top:500.25px;width:1px;height:35.25px;background:#5a6a90;"></div>
<div class="a" style="left:1214.00px;top:189.50px;width:1px;height:37.75px;background:#5a6a90;"></div>
<div class="a" style="left:1214.00px;top:226.25px;width:1px;height:35.25px;background:#5a6a90;"></div>
<div class="a" style="left:1214.00px;top:260.50px;width:1px;height:35.25px;background:#5a6a90;"></div>
<div class="a" style="left:1214.00px;top:294.75px;width:1px;height:35.25px;background:#5a6a90;"></div>
<div class="a" style="left:1214.00px;top:329.00px;width:1px;height:35.25px;background:#5a6a90;"></div>
<div class="a" style="left:1214.00px;top:363.25px;width:1px;height:35.25px;background:#5a6a90;"></div>
<div class="a" style="left:1214.00px;top:397.50px;width:1px;height:35.25px;background:#5a6a90;"></div>
<div class="a" style="left:1214.00px;top:431.75px;width:1px;height:35.25px;background:#5a6a90;"></div>
<div class="a" style="left:1214.00px;top:466.00px;width:1px;height:35.25px;background:#5a6a90;"></div>
<div class="a" style="left:1214.00px;top:500.25px;width:1px;height:35.25px;background:#5a6a90;"></div>
<span class="a" style="left:330.7px;width:200px;text-align:center;top:199.9px;font-size:22.4px;line-height:22.4px;font-weight:bold;color:#fff;transform:scaleX(1.09);white-space:nowrap;">Q1</span>
<span class="a" style="left:504.7px;width:200px;text-align:center;top:199.9px;font-size:22.4px;line-height:22.4px;font-weight:bold;color:#fff;transform:scaleX(1.09);white-space:nowrap;">Q2</span>
<span class="a" style="left:678.7px;width:200px;text-align:center;top:199.9px;font-size:22.4px;line-height:22.4px;font-weight:bold;color:#fff;transform:scaleX(1.09);white-space:nowrap;">Q3</span>
<span class="a" style="left:852.7px;width:200px;text-align:center;top:199.9px;font-size:22.4px;line-height:22.4px;font-weight:bold;color:#fff;transform:scaleX(1.09);white-space:nowrap;">Q4</span>
<span class="a" style="left:1027.3px;width:200px;text-align:center;top:199.9px;font-size:22.4px;line-height:22.4px;font-weight:bold;color:#000;transform:scaleX(1.1);white-space:nowrap;">Total</span>
<span class="nm" style="left:174.8px;top:233.0px;color:#fff;-webkit-text-stroke:0.35px #fff;transform:scaleX(1.03);">John</span>
<span class="num" style="right:1022.1px;top:233.0px;-webkit-text-stroke:0.95px #000;font-size:21.7px;transform:scaleX(1.185);">2,680</span>
<span class="num" style="right:848.1px;top:233.0px;-webkit-text-stroke:0.95px #000;font-size:21.7px;transform:scaleX(1.185);">7,512</span>
<span class="num" style="right:674.1px;top:233.0px;-webkit-text-stroke:0.95px #000;font-size:21.7px;transform:scaleX(1.185);">3,332</span>
<span class="num" style="right:500.1px;top:233.0px;-webkit-text-stroke:0.95px #000;font-size:21.7px;transform:scaleX(1.185);">6,213</span>
<span class="num" style="right:327.1px;top:233.0px;font-weight:bold;font-size:22px;transform:scaleX(1.225);">19,737</span>
<span class="nm" style="left:174.8px;top:267.2px;color:#fff;-webkit-text-stroke:0.35px #fff;transform:scaleX(1.03);">Lucy</span>
<span class="num" style="right:1022.1px;top:267.2px;-webkit-text-stroke:0.95px #000;font-size:21.7px;transform:scaleX(1.185);">2,736</span>
<span class="num" style="right:848.1px;top:267.2px;-webkit-text-stroke:0.95px #000;font-size:21.7px;transform:scaleX(1.185);">2,645</span>
<span class="num" style="right:674.1px;top:267.2px;-webkit-text-stroke:0.95px #000;font-size:21.7px;transform:scaleX(1.185);">3,632</span>
<span class="num" style="right:500.1px;top:267.2px;-webkit-text-stroke:0.95px #000;font-size:21.7px;transform:scaleX(1.185);">60</span>
<span class="num" style="right:327.1px;top:267.2px;font-weight:bold;font-size:22px;transform:scaleX(1.225);">9,073</span>
<span class="nm" style="left:174.8px;top:301.5px;color:#fff;-webkit-text-stroke:0.35px #fff;transform:scaleX(1.03);">George</span>
<span class="num" style="right:1022.1px;top:301.5px;-webkit-text-stroke:0.95px #000;font-size:21.7px;transform:scaleX(1.185);">7,234</span>
<span class="num" style="right:848.1px;top:301.5px;-webkit-text-stroke:0.95px #000;font-size:21.7px;transform:scaleX(1.185);">7,506</span>
<span class="num" style="right:674.1px;top:301.5px;-webkit-text-stroke:0.95px #000;font-size:21.7px;transform:scaleX(1.185);">9,867</span>
<span class="num" style="right:500.1px;top:301.5px;-webkit-text-stroke:0.95px #000;font-size:21.7px;transform:scaleX(1.185);">3,842</span>
<span class="num" style="right:327.1px;top:301.5px;font-weight:bold;font-size:22px;transform:scaleX(1.225);">28,449</span>
<span class="nm" style="left:174.8px;top:335.7px;color:#fff;-webkit-text-stroke:0.35px #fff;transform:scaleX(1.03);">Grace</span>
<span class="num" style="right:1022.1px;top:335.7px;-webkit-text-stroke:0.95px #000;font-size:21.7px;transform:scaleX(1.185);">8,710</span>
<span class="num" style="right:848.1px;top:335.7px;-webkit-text-stroke:0.95px #000;font-size:21.7px;transform:scaleX(1.185);">9,102</span>
<span class="num" style="right:674.1px;top:335.7px;-webkit-text-stroke:0.95px #000;font-size:21.7px;transform:scaleX(1.185);">953</span>
<span class="num" style="right:500.1px;top:335.7px;-webkit-text-stroke:0.95px #000;font-size:21.7px;transform:scaleX(1.185);">8,688</span>
<span class="num" style="right:327.1px;top:335.7px;font-weight:bold;font-size:22px;transform:scaleX(1.225);">27,453</span>
<span class="nm" style="left:174.8px;top:370.0px;color:#fff;-webkit-text-stroke:0.35px #fff;transform:scaleX(1.03);">Maria</span>
<span class="num" style="right:1022.1px;top:370.0px;-webkit-text-stroke:0.95px #000;font-size:21.7px;transform:scaleX(1.185);">5,209</span>
<span class="num" style="right:848.1px;top:370.0px;-webkit-text-stroke:0.95px #000;font-size:21.7px;transform:scaleX(1.185);">2,588</span>
<span class="num" style="right:674.1px;top:370.0px;-webkit-text-stroke:0.95px #000;font-size:21.7px;transform:scaleX(1.185);">1,802</span>
<span class="num" style="right:500.1px;top:370.0px;-webkit-text-stroke:0.95px #000;font-size:21.7px;transform:scaleX(1.185);">6,942</span>
<span class="num" style="right:327.1px;top:370.0px;font-weight:bold;font-size:22px;transform:scaleX(1.225);">16,541</span>
<span class="nm" style="left:174.8px;top:404.2px;color:#fff;-webkit-text-stroke:0.35px #fff;transform:scaleX(1.03);">Herman</span>
<span class="num" style="right:1022.1px;top:404.2px;-webkit-text-stroke:0.95px #000;font-size:21.7px;transform:scaleX(1.185);">4,164</span>
<span class="num" style="right:848.1px;top:404.2px;-webkit-text-stroke:0.95px #000;font-size:21.7px;transform:scaleX(1.185);">61</span>
<span class="num" style="right:674.1px;top:404.2px;-webkit-text-stroke:0.95px #000;font-size:21.7px;transform:scaleX(1.185);">3,807</span>
<span class="num" style="right:500.1px;top:404.2px;-webkit-text-stroke:0.95px #000;font-size:21.7px;transform:scaleX(1.185);">2,828</span>
<span class="num" style="right:327.1px;top:404.2px;font-weight:bold;font-size:22px;transform:scaleX(1.225);">10,860</span>
<span class="nm" style="left:174.8px;top:438.5px;color:#fff;-webkit-text-stroke:0.35px #fff;transform:scaleX(1.03);">Bob</span>
<span class="num" style="right:1022.1px;top:438.5px;-webkit-text-stroke:0.95px #000;font-size:21.7px;transform:scaleX(1.185);">8,742</span>
<span class="num" style="right:848.1px;top:438.5px;-webkit-text-stroke:0.95px #000;font-size:21.7px;transform:scaleX(1.185);">4,440</span>
<span class="num" style="right:674.1px;top:438.5px;-webkit-text-stroke:0.95px #000;font-size:21.7px;transform:scaleX(1.185);">6,841</span>
<span class="num" style="right:500.1px;top:438.5px;-webkit-text-stroke:0.95px #000;font-size:21.7px;transform:scaleX(1.185);">1,149</span>
<span class="num" style="right:327.1px;top:438.5px;font-weight:bold;font-size:22px;transform:scaleX(1.225);">21,172</span>
<span class="nm" style="left:174.8px;top:472.7px;color:#fff;-webkit-text-stroke:0.35px #fff;transform:scaleX(1.03);">Jane</span>
<span class="num" style="right:1022.1px;top:472.7px;-webkit-text-stroke:0.95px #000;font-size:21.7px;transform:scaleX(1.185);">1,585</span>
<span class="num" style="right:848.1px;top:472.7px;-webkit-text-stroke:0.95px #000;font-size:21.7px;transform:scaleX(1.185);">3,969</span>
<span class="num" style="right:674.1px;top:472.7px;-webkit-text-stroke:0.95px #000;font-size:21.7px;transform:scaleX(1.185);">3,217</span>
<span class="num" style="right:500.1px;top:472.7px;-webkit-text-stroke:0.95px #000;font-size:21.7px;transform:scaleX(1.185);">1,502</span>
<span class="num" style="right:327.1px;top:472.7px;font-weight:bold;font-size:22px;transform:scaleX(1.225);">10,273</span>
<span class="nm" style="left:174.8px;top:507.0px;color:#000;-webkit-text-stroke:0.35px #000;transform:scaleX(1.03);">Total</span>
<span class="num" style="right:1022.1px;top:507.0px;font-weight:bold;font-size:22px;transform:scaleX(1.225);">41,060</span>
<span class="num" style="right:848.1px;top:507.0px;font-weight:bold;font-size:22px;transform:scaleX(1.225);">37,823</span>
<span class="num" style="right:674.1px;top:507.0px;font-weight:bold;font-size:22px;transform:scaleX(1.225);">33,451</span>
<span class="num" style="right:500.1px;top:507.0px;font-weight:bold;font-size:22px;transform:scaleX(1.225);">31,224</span>
<div class="a" style="left:1039.30px;top:568.55px;width:173.40px;height:34.35px;border:1.5px solid #43604f;box-sizing:content-box;"></div>
<div class="a" style="left:1210.30px;top:600.60px;width:4.2px;height:4.2px;background:#3d5a49;border:0.7px solid #fdfdfd;"></div>
</div></body></html>
